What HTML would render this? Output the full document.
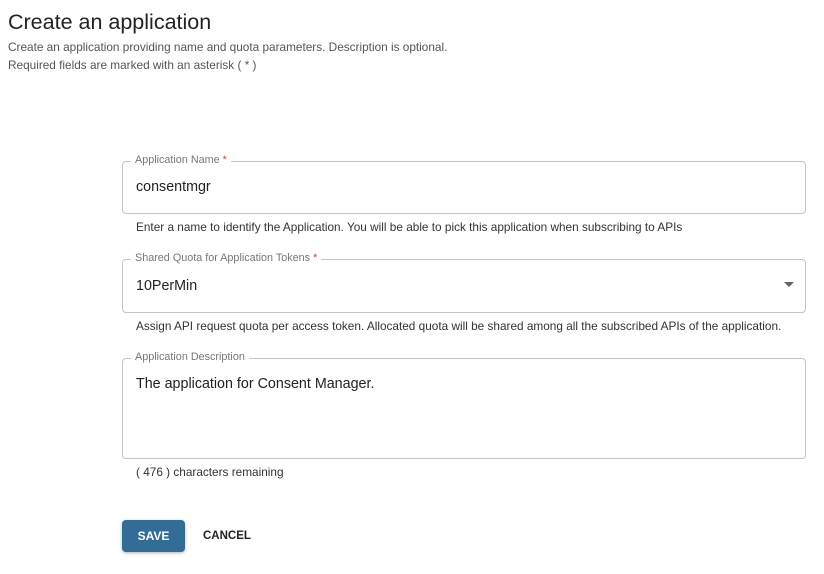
<!DOCTYPE html>
<html><head><style>
body{margin:0;width:824px;height:574px;background:#fff;font-family:"Liberation Sans",sans-serif;color:#222;position:relative;overflow:hidden}
.a{position:absolute;white-space:nowrap}
.box{position:absolute;left:122px;width:682px;border:1px solid #c4c4c4;border-radius:4px}
.lbl{position:absolute;left:131px;background:#fff;padding:0 4px;font-size:10.8px;color:#777;line-height:12px}
.lbl b{color:#e53935;font-weight:normal}
.val{position:absolute;left:136px;font-size:14.3px;color:#222}
.help{position:absolute;left:136px;font-size:11.8px;color:#333}
</style></head><body>
<div class="a" style="left:8px;top:10px;font-size:21.5px;color:#222">Create an application</div>
<div class="a" style="left:8px;top:40px;font-size:11.8px;color:#555">Create an application providing name and quota parameters. Description is optional.</div>
<div class="a" style="left:8px;top:58px;font-size:11.8px;color:#555">Required fields are marked with an asterisk ( * )</div>

<div class="box" style="top:161px;height:51px"></div>
<div class="lbl a" style="top:154px">Application Name <b>*</b></div>
<div class="val a" style="top:179px">consentmgr</div>
<div class="help a" style="top:220px">Enter a name to identify the Application. You will be able to pick this application when subscribing to APIs</div>

<div class="box" style="top:259px;height:52px"></div>
<div class="lbl a" style="top:252px">Shared Quota for Application Tokens <b>*</b></div>
<div class="val a" style="top:278px">10PerMin</div>
<div class="a" style="left:784px;top:282px;width:0;height:0;border-left:5px solid transparent;border-right:5px solid transparent;border-top:5px solid #666"></div>
<div class="help a" style="top:319px">Assign API request quota per access token. Allocated quota will be shared among all the subscribed APIs of the application.</div>

<div class="box" style="top:358px;height:99px"></div>
<div class="lbl a" style="top:351px">Application Description</div>
<div class="val a" style="top:376px">The application for Consent Manager.</div>
<div class="help a" style="top:465px">( 476 ) characters remaining</div>

<div class="a" style="left:122px;top:520px;width:63px;height:32px;background:#336c96;border-radius:4px;box-shadow:0 1px 3px rgba(0,0,0,.3);color:#fff;font-weight:bold;font-size:12px;line-height:33px;text-align:center">SAVE</div>
<div class="a" style="left:203px;top:530px;font-weight:bold;font-size:11.5px;color:#222">CANCEL</div>
</body></html>
